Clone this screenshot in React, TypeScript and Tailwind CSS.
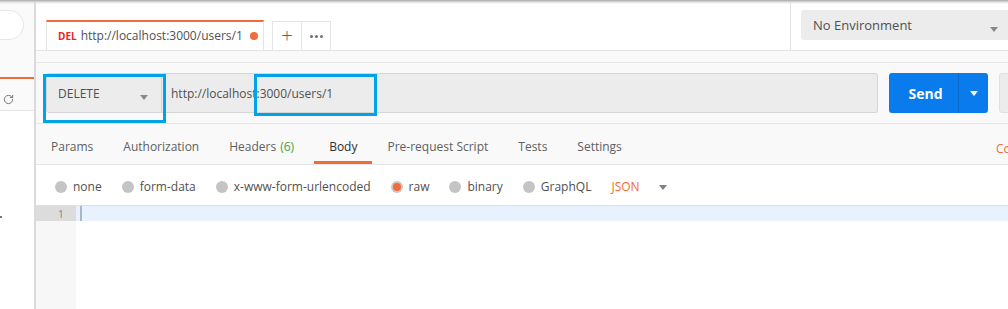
import { RotateCw } from "lucide-react";

const tabs = ["Params", "Authorization", "Headers", "Body", "Pre-request Script", "Tests", "Settings"];
const bodyTypes = ["none", "form-data", "x-www-form-urlencoded", "raw", "binary", "GraphQL"];

const Caret = ({ color = "#7a7a7a" }: { color?: string }) => (
  <span
    className="inline-block w-0 h-0 border-l-[4px] border-r-[4px] border-t-[5px] border-l-transparent border-r-transparent"
    style={{ borderTopColor: color }}
  />
);

const App = () => {
  return (
    <div className="relative w-[1008px] h-[309px] overflow-hidden flex bg-white text-[#505050] font-['Open_Sans','Liberation_Sans',sans-serif]">
      {/* top shadow */}
      <div className="absolute top-0 left-0 right-0 h-[4px] bg-gradient-to-b from-[#a8a8a8] via-[#dedede] to-transparent z-10" />

      {/* sidebar */}
      <aside className="w-[36px] shrink-0 flex flex-col border-r-2 border-[#dadada]">
        <div className="h-[77px] bg-[#fafafa] pt-[10px]">
          <div className="w-[24px] h-[30px] rounded-r-full border border-l-0 border-[#e6e6e6] bg-white" />
        </div>
        <div className="h-[2px] bg-[#f26b3a]" />
        <div className="h-[32px] bg-[#fafafa] border-b border-[#e6e6e6] flex items-center pl-[3px] pt-[10px]">
          <RotateCw size={11} strokeWidth={2} color="#707070" />
        </div>
        <div className="flex-1 relative">
          <div className="absolute left-0 top-[105px] w-[2px] h-[2px] bg-[#777]" />
        </div>
      </aside>

      {/* main */}
      <main className="flex-1 flex flex-col min-w-0 bg-[#f9f9f9]">
        {/* tab bar */}
        <div className="h-[51px] shrink-0 flex bg-white border-b border-[#e4e4e4]">
          <div className="flex items-end pl-[10px] shrink-0">
            <div className="w-[218px] h-[30px] border-t-2 border-x border-t-[#f26b3a] border-x-[#e4e4e4] bg-white flex items-center pl-[11px] pr-[5px]">
              <span className="text-[10px] font-bold text-[#e8251f] mr-[4px]">DEL</span>
              <span className="text-[12px] text-[#505050]">http://localhost:3000/users/1</span>
              <span className="ml-auto w-[8px] h-[8px] rounded-full bg-[#f26b3a]" />
            </div>
            <div className="ml-[8px] h-[29px] flex border border-b-0 border-[#e4e4e4]">
              <div className="w-[29px] flex items-center justify-center border-r border-[#e4e4e4] text-[20px] leading-none text-[#606060] font-light">+</div>
              <div className="w-[28px] flex items-center justify-center gap-[2px]">
                <span className="w-[3px] h-[3px] rounded-full bg-[#707070]" />
                <span className="w-[3px] h-[3px] rounded-full bg-[#707070]" />
                <span className="w-[3px] h-[3px] rounded-full bg-[#707070]" />
              </div>
            </div>
          </div>
          <div className="flex-1" />
          <div className="w-[218px] shrink-0 border-l border-[#e4e4e4] pl-[10px] pt-[10px]">
            <div className="h-[30px] w-[230px] rounded-[3px] bg-[#ececec] flex items-center pl-[12px] pr-[33px] pt-[1px]">
              <span className="text-[13px] text-[#505050]">No Environment</span>
              <span className="ml-auto">
                <Caret color="#888" />
              </span>
            </div>
          </div>
        </div>

        <div className="h-[12px] shrink-0 border-b border-[#e6e6e6]" />

        {/* url row */}
        <div className="h-[61px] shrink-0 flex items-center pl-[10px] border-b border-[#e6e6e6]">
          <div className="w-[116px] shrink-0 h-[40px] bg-[#ececec] border border-[#d6d6d6] rounded-l-[3px] flex items-center pl-[11px] pr-[13px] pt-[1px]">
            <span className="text-[12px] text-[#505050]">DELETE</span>
            <span className="ml-auto">
              <Caret color="#888" />
            </span>
          </div>
          <div className="w-[716px] shrink-0 h-[40px] bg-[#ececec] border border-l-0 border-[#d6d6d6] rounded-r-[3px] flex items-center pl-[9px] pt-[1px]">
            <span className="text-[12px] text-[#505050]">http://localhost:3000/users/1</span>
          </div>
          <div className="ml-[11px] shrink-0 w-[99px] h-[40px] rounded-[3px] bg-[#097bed] flex items-center">
            <span className="w-[69px] text-center pl-[4px] text-[14px] font-bold text-white">Send</span>
            <span className="w-px h-full bg-[#0868cc]" />
            <span className="flex-1 flex justify-center">
              <Caret color="#fff" />
            </span>
          </div>
          <div className="ml-[11px] shrink-0 w-[40px] h-[40px] rounded-[3px] bg-[#ececec] border border-[#e0e0e0]" />
        </div>

        {/* request tabs */}
        <div className="h-[41px] shrink-0 flex items-stretch border-b border-[#e4e4e4]">
          {tabs.map((t) => (
            <div
              key={t}
              className={
                "shrink-0 px-[15px] pt-[9px] flex items-center text-[12px] border-b-[3px] " +
                (t === "Body" ? "border-[#f26b3a] text-[#303030]" : "border-transparent text-[#606060]") +
                (t === "Headers" ? " mr-[5px]" : "")
              }
            >
              {t}
              {t === "Headers" && <span className="ml-[4px] text-[#3da34b]">(6)</span>}
            </div>
          ))}
          <div className="flex-1" />
          <div className="w-[12px] shrink-0 pt-[9px] flex items-center whitespace-nowrap text-[12px] text-[#f26b3a]">Cookies</div>
        </div>

        {/* body types */}
        <div className="h-[41px] shrink-0 bg-white border-b border-[#e0e0e0] flex items-center pl-[19px] pt-[4px] gap-[20px]">
          {bodyTypes.map((b) => (
            <div key={b} className="flex items-center gap-[6px] text-[12px] text-[#505050] shrink-0">
              {b === "raw" ? (
                <span className="w-[12px] h-[12px] rounded-full bg-[#c8c8c8] flex items-center justify-center">
                  <span className="w-[8px] h-[8px] rounded-full bg-[#f26b3a]" />
                </span>
              ) : (
                <span className="w-[12px] h-[12px] rounded-full bg-[#c4c4c4]" />
              )}
              {b}
            </div>
          ))}
          <div className="flex items-center gap-[19px] text-[12px] text-[#f26b3a] shrink-0">
            JSON
            <Caret color="#808080" />
          </div>
        </div>

        {/* editor */}
        <div className="flex-1 flex bg-white">
          <div className="w-[40px] bg-[#f7f7f7]">
            <div className="h-[15px] bg-[#dcdcdc] text-right pr-[12px] text-[11px] leading-[15px] text-[#888]">1</div>
          </div>
          <div className="flex-1">
            <div className="h-[15px] bg-[#e8f2fe] pl-[4px]">
              <div className="w-[2px] h-full bg-[#a8b8c8]" />
            </div>
          </div>
        </div>
      </main>

      {/* annotation boxes */}
      <div className="absolute left-[43px] top-[74px] w-[123px] h-[49px] border-[3px] border-[#00a2e8]" />
      <div className="absolute left-[254px] top-[74px] w-[123px] h-[42px] border-[3px] border-[#00a2e8]" />
    </div>
  );
};

export default App;
